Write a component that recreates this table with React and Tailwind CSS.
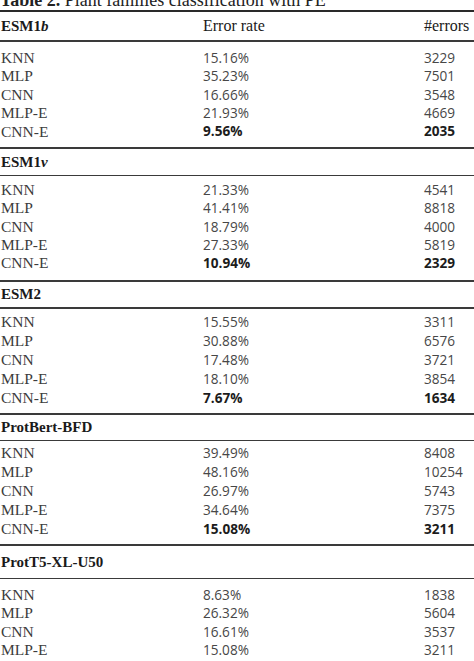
import React from "react";

const serif = "font-['Liberation_Serif','Times_New_Roman',serif]";
const sans = "font-['Open_Sans','Noto_Sans',sans-serif]";

const sections = [
  {
    name: (
      <>
        ESM1<i>v</i>
      </>
    ),
    band: "h-[26px]",
    pad: "pt-[4px] pb-[8px]",
    row: "h-[18.4px]",
    rows: [
      ["KNN", "21.33%", "4541"],
      ["MLP", "41.41%", "8818"],
      ["CNN", "18.79%", "4000"],
      ["MLP-E", "27.33%", "5819"],
      ["CNN-E", "10.94%", "2329", true],
    ],
  },
  {
    name: "ESM2",
    band: "h-[25.5px]",
    pad: "pt-[3.5px] pb-[6px]",
    row: "h-[19px]",
    rows: [
      ["KNN", "15.55%", "3311"],
      ["MLP", "30.88%", "6576"],
      ["CNN", "17.48%", "3721"],
      ["MLP-E", "18.10%", "3854"],
      ["CNN-E", "7.67%", "1634", true],
    ],
  },
  {
    name: "ProtBert-BFD",
    band: "h-[25px]",
    pad: "pt-[2px] pb-[6px]",
    row: "h-[19px]",
    rows: [
      ["KNN", "39.49%", "8408"],
      ["MLP", "48.16%", "10254"],
      ["CNN", "26.97%", "5743"],
      ["MLP-E", "34.64%", "7375"],
      ["CNN-E", "15.08%", "3211", true],
    ],
  },
  {
    name: "ProtT5-XL-U50",
    band: "h-[32px]",
    pad: "pt-[6px] pb-[6px]",
    row: "h-[18.5px]",
    rows: [
      ["KNN", "8.63%", "1838"],
      ["MLP", "26.32%", "5604"],
      ["CNN", "16.61%", "3537"],
      ["MLP-E", "15.08%", "3211"],
    ],
  },
];

const firstRows = [
  ["KNN", "15.16%", "3229"],
  ["MLP", "35.23%", "7501"],
  ["CNN", "16.66%", "3548"],
  ["MLP-E", "21.93%", "4669"],
  ["CNN-E", "9.56%", "2035", true],
];

function Rule({ thick }) {
  return <div className={thick ? "h-[2px] bg-[#2a2a2a]" : "h-[1.5px] bg-[#3a3a3a]"} />;
}

function DataBlock({ rows, pad, row }) {
  return (
    <div className={pad}>
      {rows.map(([a, b, c, bold], i) => (
        <div key={i} className={`grid grid-cols-[203px_221px_1fr] ${row} items-center`}>
          <div className={`${serif} text-[15.5px] text-[#3c3c3c] pl-px leading-none`}>{a}</div>
          <div
            className={`${sans} text-[13.6px] leading-none ${
              bold ? "font-bold text-[#1c1c1c]" : "text-[#474747]"
            }`}
          >
            {b}
          </div>
          <div
            className={`${sans} text-[13.6px] leading-none ${
              bold ? "font-bold text-[#1c1c1c]" : "text-[#474747]"
            }`}
          >
            {c}
          </div>
        </div>
      ))}
    </div>
  );
}

export default function App() {
  return (
    <div className="w-[474px] h-[661px] overflow-hidden bg-white">
      <div className="w-[500px]">
        <div className={`${serif} text-[18px] leading-[18px] -mt-[9px] h-[18px] text-[#222] whitespace-nowrap`}>
          <span className="font-bold">Table 2.</span> Plant families classification with PE
        </div>
        <div className="h-[1px]" />
        <Rule thick />
        <div className="grid grid-cols-[203px_221px_1fr] h-[28px] items-center">
          <div className={`${serif} font-bold text-[15px] text-[#1a1a1a] pl-px`}>
            ESM1<i>b</i>
          </div>
          <div className={`${serif} text-[16px] text-[#1a1a1a]`}>Error rate</div>
          <div className={`${serif} text-[16px] text-[#1a1a1a]`}>#errors</div>
        </div>
        <Rule />
        <DataBlock rows={firstRows} pad="pt-[7px] pb-[7px]" row="h-[18.4px]" />
        {sections.map((s, i) => (
          <div key={i}>
            <Rule />
            <div
              className={`flex items-center ${s.band} ${serif} font-bold text-[15px] text-[#1a1a1a] pl-px`}
            >
              {s.name}
            </div>
            <Rule />
            <DataBlock rows={s.rows} pad={s.pad} row={s.row} />
          </div>
        ))}
      </div>
    </div>
  );
}
